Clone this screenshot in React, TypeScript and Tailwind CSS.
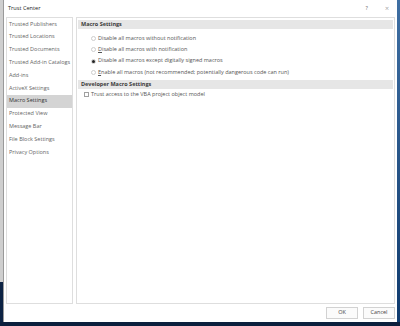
import React from 'react';

const navItems = [
  'Trusted Publishers',
  'Trusted Locations',
  'Trusted Documents',
  'Trusted Add-in Catalogs',
  'Add-ins',
  'ActiveX Settings',
  'Macro Settings',
  'Protected View',
  'Message Bar',
  'File Block Settings',
  'Privacy Options',
];

const font = { fontFamily: '"Open Sans", "Noto Sans", sans-serif' };

function Radio({ checked, children }: { checked?: boolean; children: React.ReactNode }) {
  return (
    <div className="flex items-center h-[11.3px]">
      <span className="ml-[13px] w-[5px] h-[5px] rounded-full border-[0.6px] border-[#cdcdcd] bg-white flex items-center justify-center">
        {checked && <span className="w-[2.6px] h-[2.6px] rounded-full bg-[#222]" />}
      </span>
      <span className="ml-[2px] text-[#555]">{children}</span>
    </div>
  );
}

function SectionHeader({ children }: { children: React.ReactNode }) {
  return (
    <div className="h-[9px] bg-[#e6e6e6] flex items-center pl-[3px] font-bold text-[#3a3a3a]">{children}</div>
  );
}

export default function App() {
  return (
    <div className="w-[400px] h-[326px] bg-[#0d2344] flex flex-col overflow-hidden" style={font}>
      <div className="flex h-[322px]">
        {/* desktop strip behind */}
        <div className="w-[3px] flex flex-col">
          <div className="h-[282px] bg-[#cfcfcf]" />
          <div className="flex-1 bg-[#0d2344]" />
        </div>

        {/* dialog window */}
        <div className="w-[394px] bg-white border-l border-[#9a9a9a] flex flex-col text-[5.5px] leading-none">
          {/* title bar */}
          <div className="h-[17px] flex items-center pl-[4px] pr-[8px] text-[5.6px] text-[#222]">
            <span>Trust Center</span>
            <span className="ml-auto text-[#666]">?</span>
            <span className="ml-[17px] text-[7px] font-light text-[#555]">×</span>
          </div>

          {/* body */}
          <div className="h-[287px] flex pl-[2px] pr-[2px] gap-[3px]">
            <div className="w-[67px] border border-[#dedede] flex flex-col">
              {navItems.map(item => (
                <div
                  key={item}
                  className={`h-[12.8px] flex items-center pl-[2px] whitespace-nowrap ${
                    item === 'Macro Settings' ? 'bg-[#d4d4d4] text-[#333]' : 'text-[#666]'
                  }`}
                >
                  {item}
                </div>
              ))}
            </div>

            <div className="flex-1 border border-[#dedede] px-[1px] pt-[2px]">
              <SectionHeader>Macro Settings</SectionHeader>
              <div className="pt-[4px] pb-[2px]">
                <Radio>Disable all macros without notification</Radio>
                <Radio>
                  <span className="underline">D</span>isable all macros with notification
                </Radio>
                <Radio checked>Disable all macros except digitally signed macros</Radio>
                <Radio>
                  <span className="underline">E</span>nable all macros (not recommended; potentially dangerous code can run)
                </Radio>
              </div>
              <SectionHeader>Developer Macro Settings</SectionHeader>
              <div className="flex items-center h-[11px] pl-[6px]">
                <span className="w-[5px] h-[5px] border-[0.6px] border-[#a0a0a0] bg-white" />
                <span className="ml-[2px] text-[#555]">Trust access to the VBA project object model</span>
              </div>
            </div>
          </div>

          {/* footer */}
          <div className="flex-1 flex items-center justify-end gap-[5px] pr-[2px] pb-[1px]">
            <button className="w-[32px] h-[12px] border border-[#d2d2d2] bg-[#fbfbfb] text-[#444] flex items-center justify-center">
              OK
            </button>
            <button className="w-[32px] h-[12px] border border-[#d2d2d2] bg-[#fbfbfb] text-[#444] flex items-center justify-center">
              Cancel
            </button>
          </div>
        </div>

        {/* desktop strip right */}
        <div className="flex-1 bg-gradient-to-b from-[#3f6fa3] to-[#0f3b6e]" />
      </div>
      <div className="flex-1 bg-[#0b1f3d]" />
    </div>
  );
}
